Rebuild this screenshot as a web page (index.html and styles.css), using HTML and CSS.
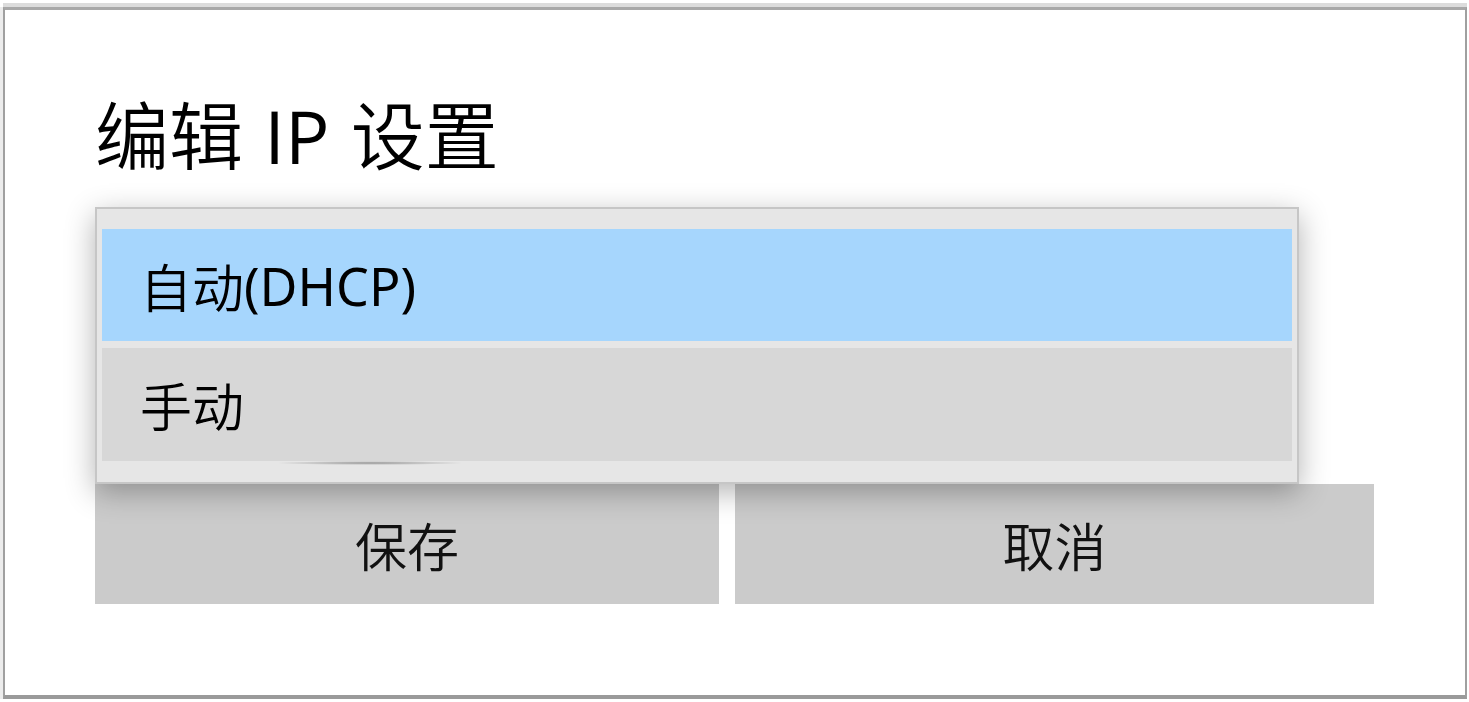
FILE: index.html
```html
<!DOCTYPE html>
<html lang="zh-CN">
<head>
<meta charset="utf-8">
<title>编辑 IP 设置</title>
<link rel="stylesheet" href="styles.css">
</head>
<body>
<div class="dialog">
  <h1 class="title">编辑 <span class="title-latin">IP</span> 设置</h1>
  <div class="popup">
    <div class="item selected">自动<span class="latin">(DHCP)</span></div>
    <div class="item">手动</div>
    <div class="popup-foot"></div>
  </div>
  <div class="buttons">
    <div class="btn">保存</div>
    <div class="btn">取消</div>
  </div>
</div>
</body>
</html>
```
FILE: styles.css
```css
html, body {
  margin: 0;
  padding: 0;
  background: #ffffff;
}
body {
  font-family: "Noto Sans CJK SC", sans-serif;
  font-weight: 350;
  color: #000;
  width: 1469px;
  height: 702px;
  overflow: hidden;
}
.latin {
  font-family: "Noto Sans", "Open Sans", sans-serif;
  font-weight: 400;
}
.dialog {
  box-sizing: border-box;
  width: 1464px;
  height: 692px;
  margin: 7px 2px 3px 3px;
  border-style: solid;
  border-color: #a8a8a8 #a0a0a0 #9a9a9a #a0a0a0;
  border-width: 3px 2px 4px 2px;
  box-shadow: 0 -4px 0 #dcdcdc, -3px 0 0 #ececec;
  background: #fff;
  padding: 89px 90px 0 90px;
}
.title {
  margin: 0;
  font-family: "Open Sans", "Noto Sans CJK SC", sans-serif;
  font-size: 74px;
  line-height: 74px;
  font-weight: 350;
  height: 74px;
}
.title-latin {
  font-weight: 400;
  padding: 0 2px;
}
.popup {
  position: relative;
  z-index: 1;
  margin-top: 34px;
  width: 1204px;
  box-sizing: border-box;
  border: 2px solid #c6c6c6;
  background: #e6e6e6;
  padding: 20px 5px 0 5px;
  display: flex;
  flex-direction: column;
  gap: 7px;
  box-shadow: 0 8px 28px rgba(0, 0, 0, 0.3);
}
.item {
  height: 112px;
  display: flex;
  align-items: center;
  padding-left: 38px;
  font-size: 52px;
  background: #d7d7d7;
}
.item + .item {
  height: 113px;
}
.item.selected {
  background: #a6d6fd;
}
.popup-foot {
  height: 21px;
  margin-top: -7px;
  background: radial-gradient(ellipse 95px 2px at 268px 2px, rgba(0, 0, 0, 0.35), rgba(0, 0, 0, 0));
}
.buttons {
  display: grid;
  grid-template-columns: 624px 639px;
  column-gap: 16px;
}
.btn {
  height: 120px;
  background: #cbcbcb;
  display: flex;
  align-items: center;
  justify-content: center;
  font-size: 52px;
  color: #111;
}
```
